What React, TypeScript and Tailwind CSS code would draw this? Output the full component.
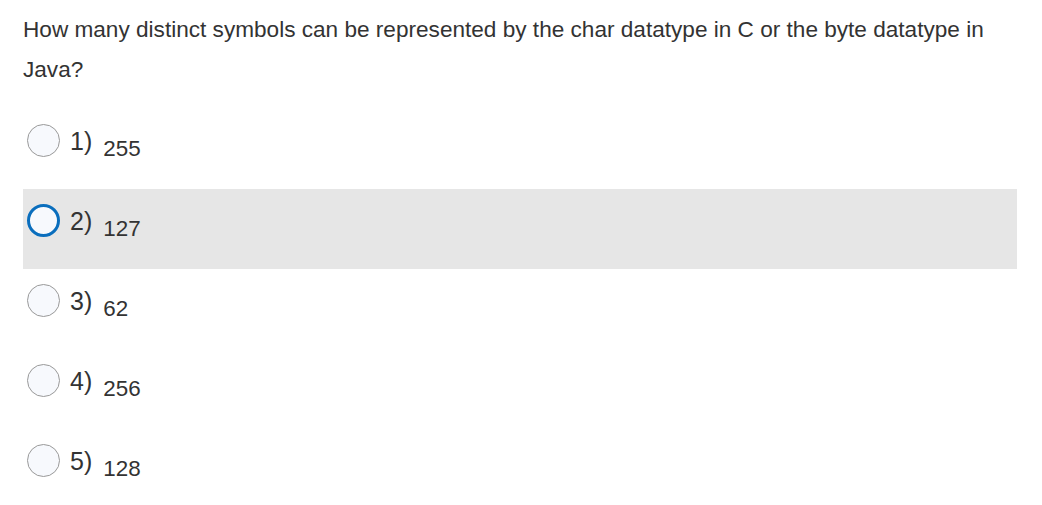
const options = [
  { n: "1)", v: "255" },
  { n: "2)", v: "127", active: true },
  { n: "3)", v: "62" },
  { n: "4)", v: "256" },
  { n: "5)", v: "128" },
];

function App() {
  return (
    <main className="min-h-screen bg-white pl-[23px] pr-[25px] pt-[10px] font-['Liberation_Sans',Arial,sans-serif] text-[#333]">
      <p className="text-[22.6px] leading-[40px]">
        How many distinct symbols can be represented by the char datatype in C or the byte datatype in Java?
      </p>
      <ul className="mt-[19px] flex flex-col">
        {options.map((o) =>
          o.active ? (
            <li key={o.n} className="flex h-[80px] items-start bg-[#e6e6e6] pl-[4px] pt-[15px]">
              <span className="h-[33px] w-[33px] shrink-0 rounded-full border-[3px] border-[#0a6ebd] bg-[#f7f9fd]" />
              <span className="ml-[10px] mt-[1px] text-[25px] leading-[32px]">{o.n}</span>
              <span className="ml-[11px] mt-[11px] text-[22.4px] leading-[28px]">{o.v}</span>
            </li>
          ) : (
            <li key={o.n} className="flex h-[80px] items-start pl-[4px] pt-[15px]">
              <span className="h-[33px] w-[33px] shrink-0 rounded-full border border-[#999] bg-[#f7f9fd]" />
              <span className="ml-[10px] mt-[1px] text-[25px] leading-[32px]">{o.n}</span>
              <span className="ml-[11px] mt-[11px] text-[22.4px] leading-[28px]">{o.v}</span>
            </li>
          )
        )}
      </ul>
    </main>
  );
}

export default App;
